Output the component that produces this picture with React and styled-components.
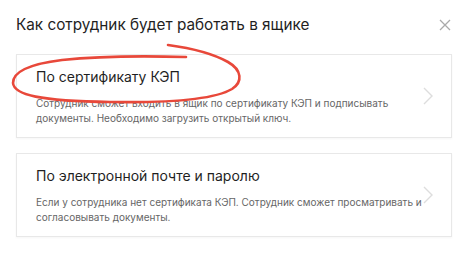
import React from "react";
import styled, { createGlobalStyle } from "styled-components";

const GlobalStyle = createGlobalStyle`
	body {
		margin: 0;
		background: #fff;
		font-family: "Inter", "Noto Sans", sans-serif;
		color: #222;
	}
`;

const Page = styled.div`
	position: relative;
	width: 474px;
	height: 259px;
	padding: 0 22px 0 16px;
	box-sizing: border-box;
	overflow: hidden;
`;

const Header = styled.div`
	display: flex;
	align-items: center;
	justify-content: space-between;
	height: 54px;
	padding-bottom: 5px;
	box-sizing: border-box;
`;

const Title = styled.h1`
	margin: 0;
	font-size: 15.3px;
	font-weight: 400;
	color: #1f1f1f;
`;

const Close = styled.button`
	border: none;
	background: none;
	padding: 0;
	width: 12px;
	height: 12px;
	display: flex;
	margin-right: 1px;
	color: #aaa;
`;

const Options = styled.div`
	display: flex;
	flex-direction: column;
	gap: 15px;
`;

const Card = styled.div`
	display: flex;
	align-items: center;
	border: 1px solid #e8e8e8;
	box-shadow: 0 1px 2px rgba(0, 0, 0, 0.04);
	padding: 12px 18px 13px 19px;
	height: 84px;
	box-sizing: border-box;
`;

const Body = styled.div`
	flex: 1;
	min-width: 0;
`;

const CardTitle = styled.div`
	font-size: 14px;
	line-height: 22px;
	color: #1f1f1f;
`;

const Description = styled.p`
	margin: 8px 0 0;
	font-size: 10px;
	line-height: 14.5px;
	color: #666;
`;

const Chevron = styled.svg`
	flex: none;
	width: 10px;
	height: 18px;
`;

const Mark = styled.svg`
	position: absolute;
	left: 0;
	top: 0;
	pointer-events: none;
`;

const options = [
	{
		title: "По сертификату КЭП",
		text: "Сотрудник сможет входить в ящик по сертификату КЭП и подписывать документы. Необходимо загрузить открытый ключ.",
	},
	{
		title: "По электронной почте и паролю",
		text: "Если у сотрудника нет сертификата КЭП. Сотрудник сможет просматривать и согласовывать документы.",
	},
];

const App = () => {
	return (
		<>
			<GlobalStyle />
			<Page>
				<Header>
					<Title>Как сотрудник будет работать в ящике</Title>
					<Close>
						<svg width="12" height="12" viewBox="0 0 12 12">
							<path d="M1 1L11 11M11 1L1 11" stroke="currentColor" strokeWidth="1.3" />
						</svg>
					</Close>
				</Header>
				<Options>
					{options.map((o) => (
						<Card key={o.title}>
							<Body>
								<CardTitle>{o.title}</CardTitle>
								<Description>{o.text}</Description>
							</Body>
							<Chevron viewBox="0 0 10 18">
								<path d="M1 1L9 9L1 17" fill="none" stroke="#ddd" strokeWidth="1.4" />
							</Chevron>
						</Card>
					))}
				</Options>
				{/* hand-drawn highlight */}
				<Mark width="474" height="259">
					<path
						d="M186 57 C150 56 100 56 62 60 C30 64 13 72 13 83 C14 95 40 101 110 102 C170 103 215 99 232 89 C243 82 242 70 228 62 C212 53 190 48 168 45"
						fill="none"
						stroke="#e8483a"
						strokeWidth="2.6"
						strokeLinecap="round"
					/>
				</Mark>
			</Page>
		</>
	);
};

export default App;
